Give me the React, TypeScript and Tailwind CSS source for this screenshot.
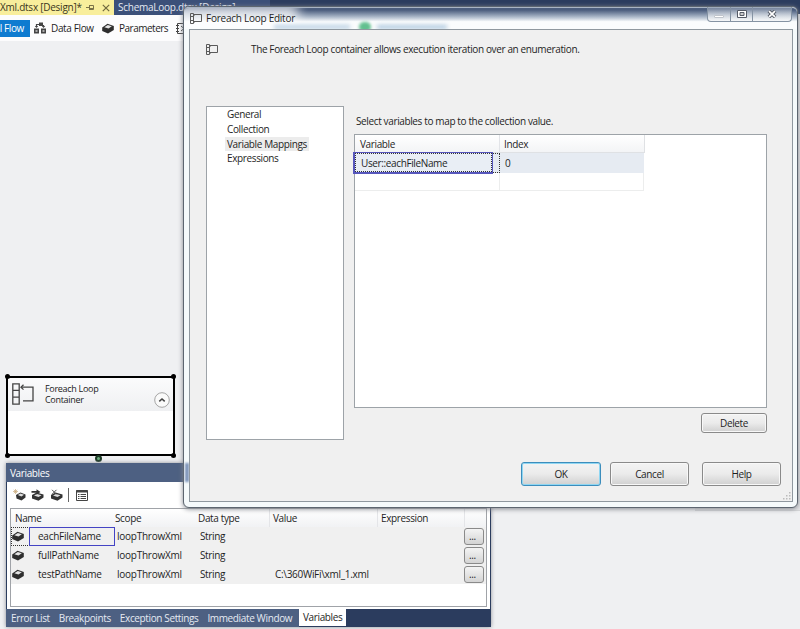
import type { ReactNode } from "react";
import clsx from "clsx";

const categories = ["General", "Collection", "Variable Mappings", "Expressions"];

const variables = [
  { name: "eachFileName", scope: "loopThrowXml", type: "String", value: "" },
  { name: "fullPathName", scope: "loopThrowXml", type: "String", value: "" },
  { name: "testPathName", scope: "loopThrowXml", type: "String", value: "C:\\360WiFi\\xml_1.xml" },
];

function LoopIcon({ className }: { className?: string }) {
  return (
    <svg viewBox="0 0 12 11" className={className} fill="none" stroke="#5a5a5a" strokeWidth="1">
      <path d="M0.5 0.5h3v10h-3zM0.5 3.500h3M0.5 7.500h3M5 1.500h6.500v7H5M4.500 1v1.500M4.500 8v1.500" />
    </svg>
  );
}

function ContainerIcon() {
  return (
    <svg viewBox="0 0 22 22" className="h-[22px] w-[22px] shrink-0" fill="none" stroke="#444" strokeWidth="1.3">
      <path d="M0.8 0.8h6.4v20.4H0.8zM0.8 7.4h6.4M0.8 14.2h6.4M9 4.2h12v13.6H11" />
      <path d="M11.5 1.8 9 4.2l2.5 2.4" />
    </svg>
  );
}

function CubeIcon({ className }: { className?: string }) {
  return (
    <svg viewBox="0 0 12 11" className={className}>
      <path d="M0.2 4.600 5.500 0.800 11.800 3v4L6 10.500 0.2 8z" fill="#2e2e2e" />
      <path d="M2.300 4.300 5.800 1.900l4 1.300L6.500 5.600z" fill="#e4e4e4" />
    </svg>
  );
}

function DataFlowIcon() {
  return (
    <svg viewBox="0 0 12 12" className="h-3 w-3 shrink-0">
      <path d="M0 6.500h5v5H0zM7 6.500h5v5H7z" fill="#444" />
      <path d="M1.500 8h2v2h-2zM8.500 8h2v2h-2z" fill="#aaa" />
      <path d="M2.500 5V2.500h3M9.500 5V3" stroke="#444" fill="none" strokeWidth="1.200" />
      <path d="M5 0.500h4v3.500H5zM0.800 4h3.400L2.500 6zM7.800 4h3.400L9.500 6z" fill="#444" />
    </svg>
  );
}

function DialogButton({ children, className }: { children: ReactNode; className?: string }) {
  return (
    <button
      className={clsx(
        "flex items-center justify-center rounded-[3px] border bg-linear-to-b from-[#f3f3f3] via-[#ebebeb] to-[#d0d0d0]",
        className,
      )}
    >
      {children}
    </button>
  );
}

function EditorTabs() {
  return (
    <div>
      <div className="flex h-[15px] bg-[#2b3c5e] leading-[15px]">
        <div className="flex w-[114px] shrink-0 items-center bg-[#f8ee9c] text-[#3b3620]">
          <span className="w-[86px] shrink-0 tracking-[-0.25px] whitespace-nowrap">Xml.dtsx [Design]*</span>
          <svg viewBox="0 0 8 7" className="h-[7px] w-2" fill="none" stroke="#7a7348">
            <path d="M0 3.500h3M3.500 1v5M4 1.500h3.500v4H4M4 4.500h3.500" />
          </svg>
          <svg viewBox="0 0 8 8" className="ml-[8px] h-2 w-2" fill="none" stroke="#6f683f" strokeWidth="1.200">
            <path d="M0.800 0.800l6.400 6.400M7.200 0.800L0.800 7.200" />
          </svg>
        </div>
        <div className="w-[156px] bg-[#3b5079] pl-1 tracking-[-0.25px] text-[#e4e9f2]">SchemaLoop.dtsx [Design]</div>
      </div>
      <div className="flex h-[26px] items-center bg-[#fcfcfd] text-[#1e1e1e]">
        <div className="flex h-[17px] w-[30px] items-center justify-end overflow-hidden bg-[#0e7bd0] pr-[6px] whitespace-nowrap text-white">
          ol Flow
        </div>
        <div className="ml-1 flex w-[68px] items-center gap-[5px] whitespace-nowrap">
          <DataFlowIcon />
          Data Flow
        </div>
        <div className="flex w-[74px] items-center gap-[5px] tracking-[-0.5px]">
          <CubeIcon className="h-[11px] w-3 shrink-0" />
          Parameters
        </div>
        <svg viewBox="0 0 9 11" className="h-[11px] w-[9px]" fill="none" stroke="#444">
          <path d="M1.500 0.500h7v10h-7zM0 2.500h3M0 5.500h3M0 8.500h3M5 3l3 2.500L5 8" />
        </svg>
      </div>
    </div>
  );
}

function ForeachContainer() {
  const handle = "absolute h-[5px] w-[5px] rounded-full bg-black";
  return (
    <div className="absolute top-[376px] left-[6px] h-[80px] w-[169px] border-2 border-black bg-white">
      <div className="flex h-[33px] bg-linear-to-b from-[#fbfbfc] to-[#eff0f2] pt-[5px] pl-1 text-[9px] leading-[11px] tracking-[-0.3px] text-[#222]">
        <ContainerIcon />
        <div className="ml-[11px] w-[109px] shrink-0">
          Foreach Loop
          <br />
          Container
        </div>
        <svg viewBox="0 0 16 16" className="mt-[9px] h-4 w-4 shrink-0" fill="none">
          <circle cx="8" cy="8" r="7.300" fill="#fafafa" stroke="#a5a5a5" />
          <path d="M5.300 9.300 8 7l2.700 2.300" stroke="#444" strokeWidth="1.600" />
        </svg>
      </div>
      <i className={clsx(handle, "-top-[4px] -left-[3px]")} />
      <i className={clsx(handle, "-top-[4px] -right-[3px]")} />
      <i className={clsx(handle, "-bottom-[4px] -left-[3px]")} />
      <i className={clsx(handle, "-right-[3px] -bottom-[4px]")} />
      <i className="absolute -bottom-[8px] left-[87px] h-[7px] w-[7px] rounded-full border-2 border-[#1d3a26] bg-[#6fae7e]" />
    </div>
  );
}

function VariablesToolbar() {
  return (
    <div className="flex h-[26px] items-center bg-white pl-[3px]">
      <svg viewBox="0 0 13 12" className="h-3 w-[13px]">
        <path d="M3 6 7.500 3.500 12.500 5.500v3L8.500 11.500 3.500 9.500z" fill="#333" />
        <path d="M4.800 6 7.500 4.600l3.500 1.200-2.500 1.800z" fill="#ddd" />
        <path d="M2.500 0v5M0 2.500h5M0.800 0.800l3.400 3.400M4.200 0.800 0.800 4.200" stroke="#c9a978" strokeWidth="0.700" />
      </svg>
      <svg viewBox="0 0 13 12" className="ml-[5px] h-3 w-[13px]">
        <path d="M1 6 5.500 3.500 12.500 5.500v3L7.500 11.800 1 9.500z" fill="#333" />
        <path d="M3 6.500 6 5l4.500 1.200-3 1.800z" fill="#ddd" />
        <path d="M0.500 2h5V0.200L9.500 3 5.500 5.500V3.800h-5z" fill="#333" />
      </svg>
      <svg viewBox="0 0 13 12" className="ml-[6px] h-3 w-[13px]">
        <path d="M1 6 5.500 3.500 12.500 5.500v3L7.500 11.800 1 9.500z" fill="#333" />
        <path d="M3 6.500 6 5l4.500 1.200-3 1.800z" fill="#ddd" />
        <path d="M2 0.800l4.500 4.500M6.500 0.800 2 5.300" stroke="#555" strokeWidth="1" />
      </svg>
      <div className="ml-[5px] h-[14px] w-px bg-[#666]" />
      <svg viewBox="0 0 12 11" className="ml-[7px] h-[11px] w-3" fill="none" stroke="#444">
        <path d="M0.500 0.500h11v10H0.500z" />
        <path d="M0 1.500h12" strokeWidth="2" />
        <path d="M2 4.500h1.500M4.500 4.500H10M2 6.500h1.500M4.500 6.500H10M2 8.500h1.500M4.500 8.500H10" />
      </svg>
    </div>
  );
}

function VariablesWindow() {
  const columns = "grid grid-cols-[101px_82px_75px_108px_87px_1fr]";
  return (
    <div className="absolute top-[463px] left-[6px] flex h-[164px] w-[485px] flex-col bg-[#2b3c5e] text-[#1e1e1e] shadow-[0_0_4px_#8c8f96]">
      <div className="h-[19px] bg-[#4d6082] pl-1 leading-[20px] text-white">Variables</div>
      <div className="mx-px flex h-[127px] flex-col bg-white px-[3px]">
        <VariablesToolbar />
        <div className="h-[99px] border border-[#a0a3a8]">
          <div className={clsx(columns, "h-[18px] bg-linear-to-b from-white to-[#f1f2f4] leading-[18px]")}>
            <span className="pl-1">Name</span>
            <span className="pl-[3px]">Scope</span>
            <span className="pl-1">Data type</span>
            <span className="border-l border-[#e4e5e8] pl-[3px]">Value</span>
            <span className="border-l border-[#e4e5e8] pl-[3px]">Expression</span>
            <span className="border-l border-[#e4e5e8]" />
          </div>
          {variables.map((variable, index) => (
            <div key={variable.name} className={clsx(columns, "h-[19px] bg-[#f0f0f0] leading-[19px]")}>
              <div className="flex">
                <div
                  className={clsx(
                    "flex w-[19px] items-center border",
                    index === 0 ? "border-dotted border-[#333]" : "border-transparent",
                  )}
                >
                  <CubeIcon className="h-[11px] w-3" />
                </div>
                <span
                  className={clsx(
                    "-mr-[3px] -ml-px flex-1 border pl-[8px] leading-[17px] tracking-[-0.25px]",
                    index === 0 ? "border-[#4444c4]" : "border-transparent",
                  )}
                >
                  {variable.name}
                </span>
              </div>
              <span className="pl-[5px] tracking-[-0.25px]">{variable.scope}</span>
              <span className="pl-[6px]">{variable.type}</span>
              <span className="pl-[6px] tracking-[-0.3px]">{variable.value}</span>
              <span />
              <button className="mt-[1px] h-[17px] w-5 rounded-[3px] border border-[#8a8a8a] bg-linear-to-b from-[#f4f4f4] to-[#d4d4d4] pl-[4px] text-left leading-[15px]">
                ...
              </button>
            </div>
          ))}
        </div>
      </div>
      <div className="flex h-[18px] bg-[#2b3c5e] text-[#e6eaf2]">
        <div className="flex w-[293px] gap-[9px] bg-[#4d6082] pl-[5px] leading-[18px] whitespace-nowrap">
          <span>Error List</span>
          <span>Breakpoints</span>
          <span>Exception Settings</span>
          <span>Immediate Window</span>
        </div>
        <div className="h-[17px] w-[47px] bg-white pl-[4px] leading-[17px] text-[#1e1e1e]">Variables</div>
      </div>
    </div>
  );
}

function CaptionButtons() {
  return (
    <div className="flex h-[15px] w-[85px] rounded-b-[4px] border border-t-0 border-[#8593a3] bg-linear-to-b from-[#8e9cb0]/50 to-[#f4f6f8]">
      <div className="flex w-[23px] items-end justify-center border-r border-[#8593a3] pb-[3px]">
        <i className="h-[3px] w-[10px] rounded-[1px] border border-[#c0c5cc] bg-white" />
      </div>
      <div className="flex w-[22px] items-center justify-center border-r border-[#8593a3]">
        <svg viewBox="0 0 10 8" className="h-2 w-[10px]">
          <path d="M0.500 0.500h9v7h-9z" fill="#fff" stroke="#555b66" />
          <path d="M3 2.500h4v3H3z" fill="#ccc" stroke="#555b66" />
        </svg>
      </div>
      <div className="flex flex-1 items-center justify-center">
        <svg viewBox="0 0 10 8" className="h-2 w-[10px]">
          <path d="M1.800 1l6.400 6M8.200 1 1.800 7" stroke="#555b66" strokeWidth="3.600" />
          <path d="M2 1.200l6 5.600M8 1.200 2 6.800" stroke="#fff" strokeWidth="1.700" />
        </svg>
      </div>
    </div>
  );
}

function MappingGrid() {
  return (
    <div className="h-[274px] w-[413px] border border-[#9da3a8] bg-white">
      <div className="grid h-[18px] w-[290px] grid-cols-[144px_146px] border-r border-b border-[#dfe1e4] bg-linear-to-b from-white to-[#f3f4f6] leading-[18px]">
        <span className="pl-[5px]">Variable</span>
        <span className="border-l border-[#e2e4e8] pl-1">Index</span>
      </div>
      <div className="flex h-[20px] w-[289px] bg-[#e6ebf2] leading-[18px]">
        <div className="-mt-px -ml-[2px] h-[22px] w-[140px] border border-b-2 border-l-2 border-[#5656bc] bg-[#e9eef5]">
          <div className="h-[19px] border border-dotted border-[#333] pl-[5px] leading-[18px]">User::eachFileName</div>
        </div>
        <div className="w-[7px] border border-l-0 border-dotted border-[#333]" />
        <span className="pl-[5px] leading-[20px]">0</span>
      </div>
      <div className="grid h-[18px] w-[289px] grid-cols-[145px_144px] border-r border-b border-[#eceded]">
        <span className="border-r border-[#eceded]" />
      </div>
    </div>
  );
}

function LoopEditorDialog() {
  return (
    <div className="absolute top-[6px] left-[183px] h-[502px] w-[615px] rounded-[6px] border border-[#5d6670] bg-[#f5fafb] px-[5px] pb-[6px] text-[#1e1e1e] shadow-[0_1px_5px_0px_#80858c]">
      <div className="absolute inset-x-0 top-0 h-[22px] overflow-hidden rounded-t-[5px] border-t border-[#a9b4c4] bg-linear-to-b from-[#4c5e7e] from-10% via-[#b4c0cf] via-45% to-[#fafcfd] to-65%">
        <i className="absolute -top-1 -left-4 h-[22px] w-[130px] bg-white/75 blur-[6px]" />
        <i className="absolute top-[17px] left-[90px] h-1 w-[76px] bg-[#8fb3d3]/60 blur-[2px]" />
        <i className="absolute top-[14px] left-[175px] h-[10px] w-3 rounded-full bg-[#62c08f] blur-[1.500px]" />
        <i className="absolute top-[17px] left-[193px] h-1 w-[70px] bg-[#8fb3d3]/70 blur-[2px]" />
      </div>
      {/* title bar of the window behind, seen through the glass frame */}
      <i className="absolute top-[456px] left-px h-[19px] w-[4px] bg-[#7b93b8] blur-[1px]" />
      <div className="relative flex h-[22px] items-start justify-between">
        <div className="flex items-center gap-[4px] pt-[4px] pl-px leading-[14px] tracking-[-0.25px]">
          <LoopIcon className="h-[11px] w-3" />
          Foreach Loop Editor
        </div>
        <CaptionButtons />
      </div>
      <div className="relative h-[473px] w-[604px] border border-[#8f989f] bg-[#f0f0f0]">
        <div className="flex h-[76px] items-start pt-[12px] pl-[16px]">
          <LoopIcon className="mt-[2px] h-[11px] w-3" />
          <p className="ml-[33px] leading-[14px]">
            The Foreach Loop container allows execution iteration over an enumeration.
          </p>
        </div>
        <div className="flex pl-[16px]">
          <ul className="h-[334px] w-[138px] border border-[#9da3a8] bg-white pl-[18px] leading-[14.800px]">
            {categories.map((category) => (
              <li key={category}>
                <span className={clsx("inline-block px-[2px]", category === "Variable Mappings" && "bg-[#ececec]")}>
                  {category}
                </span>
              </li>
            ))}
          </ul>
          <div className="ml-[10px] flex w-[414px] flex-col pt-[8px]">
            <p className="h-[20px] pl-[2px] leading-[14px]">Select variables to map to the collection value.</p>
            <MappingGrid />
            <DialogButton className="mt-[5px] mr-px h-[20px] w-[66px] self-end border-[#8a8a8a] shadow-[inset_0_0_0_1px_#f8f8f8]">
              Delete
            </DialogButton>
          </div>
        </div>
        <div className="mt-[22px] flex justify-end pr-[11px]">
          <DialogButton className="mr-[9px] h-6 w-[80px] border-[#3c8dbc] shadow-[inset_0_0_0_1px_#8fd6f2]">OK</DialogButton>
          <DialogButton className="mr-[13px] h-6 w-[79px] border-[#8a8a8a] shadow-[inset_0_0_0_1px_#f8f8f8]">
            Cancel
          </DialogButton>
          <DialogButton className="h-6 w-[79px] border-[#8a8a8a] shadow-[inset_0_0_0_1px_#f8f8f8]">Help</DialogButton>
        </div>
        <svg viewBox="0 0 8 8" className="absolute right-px bottom-px h-2 w-2" fill="#bcbcbc">
          <path d="M6 0h1.500v1.500H6zM3 3h1.500v1.500H3zM6 3h1.500v1.500H6zM0 6h1.500v1.500H0zM3 6h1.500v1.500H3zM6 6h1.500v1.500H6z" />
        </svg>
      </div>
    </div>
  );
}

export default function App() {
  return (
    <main className="relative h-[629px] w-[800px] overflow-hidden bg-[#eff0f2] font-['Open_Sans','Noto_Sans',sans-serif] text-[10px] tracking-[-0.37px]">
      <EditorTabs />
      <div className="absolute top-[14px] right-0 h-[497px] w-[105px] border-b border-[#d5d6d8] bg-[#e3e4e6]" />
      <ForeachContainer />
      <VariablesWindow />
      <LoopEditorDialog />
    </main>
  );
}
